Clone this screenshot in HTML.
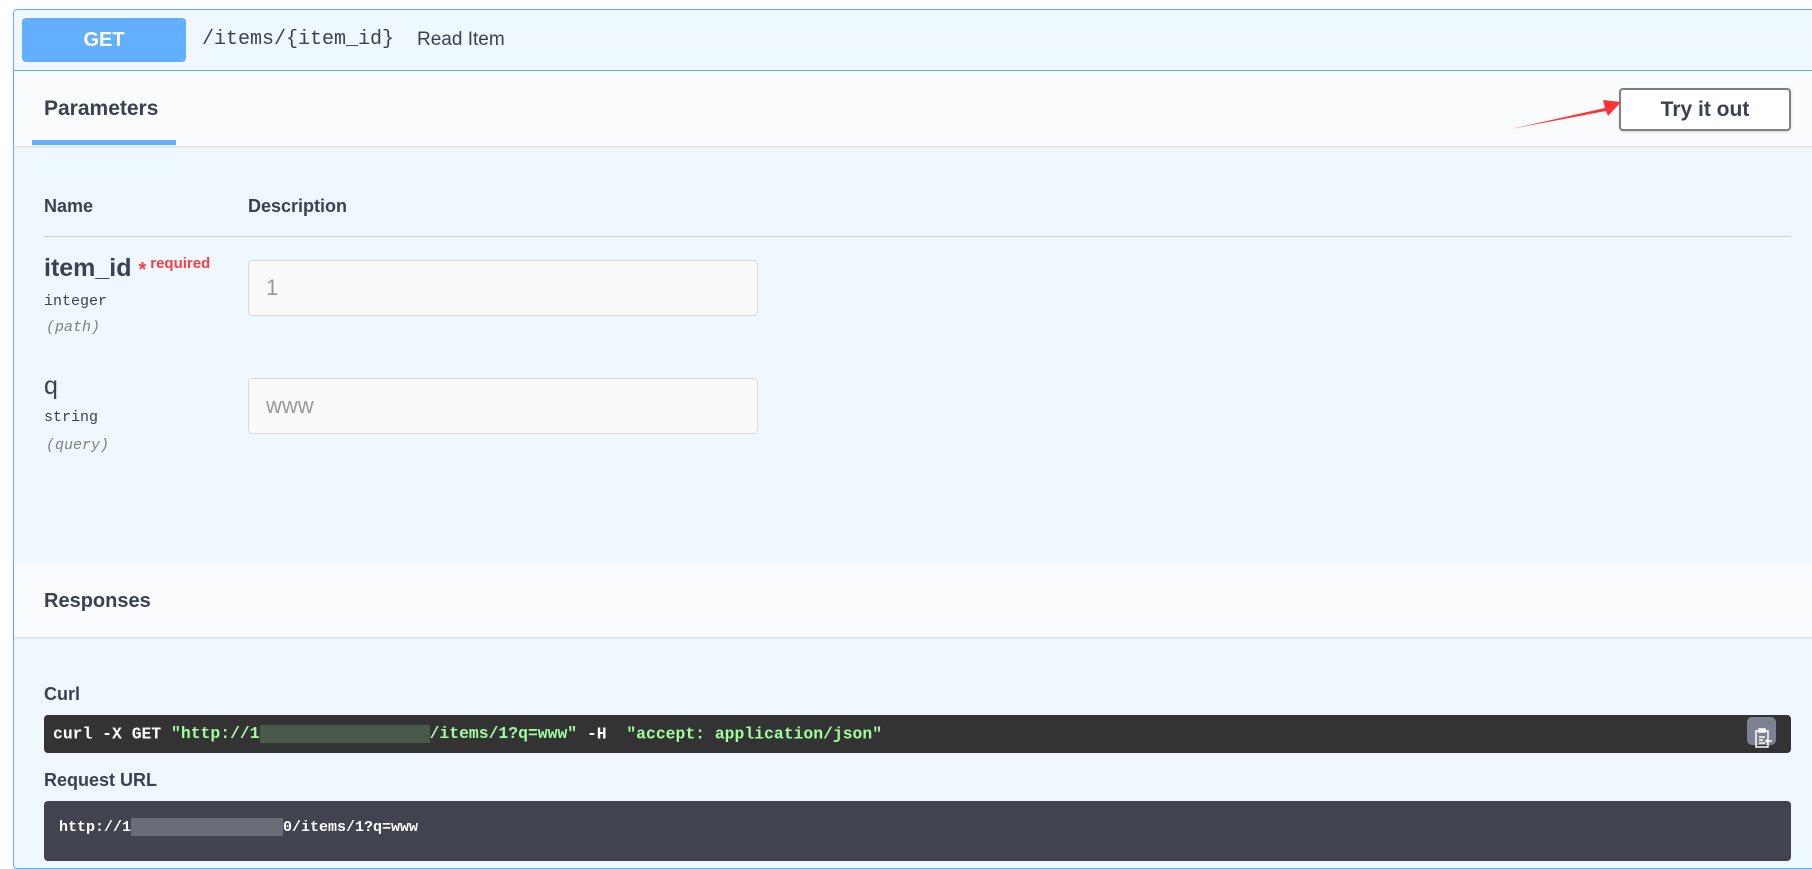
<!DOCTYPE html>
<html><head><meta charset="utf-8"><style>
*{box-sizing:border-box;margin:0;padding:0}
body{width:1812px;height:851px;overflow:hidden;background:#fff;font-family:"Liberation Sans",sans-serif;color:#3b4151;position:relative}
.abs{position:absolute}
.mono{font-family:"Liberation Mono",monospace}
</style></head><body>
<div class="abs" style="left:13px;top:9px;width:1820px;height:860px;border:1px solid #61affe;background:#eff7ff;border-radius:4px"></div>
<div class="abs" style="left:14px;top:70px;width:1800px;height:1px;background:#61affe"></div>
<div class="abs" style="left:22px;top:18px;width:164px;height:44px;background:#61affe;border-radius:4px;color:#fff;font-weight:bold;font-size:20px;line-height:44px;text-align:center">GET</div>
<div class="abs mono" style="left:202px;top:28px;font-size:20px;line-height:24px;color:#3b4151">/items/{item_id}</div>
<div class="abs" style="left:417px;top:29px;font-size:19px;line-height:22px;color:#3b4151">Read Item</div>

<div class="abs" style="left:14px;top:71px;width:1800px;height:75px;background:#fafbfd;box-shadow:0 1px 2px rgba(0,0,0,.12)"></div>
<div class="abs" style="left:44px;top:97px;font-size:21px;font-weight:bold;line-height:24px">Parameters</div>
<div class="abs" style="left:32px;top:140px;width:144px;height:5px;background:#61affe"></div>
<div class="abs" style="left:1619px;top:88px;width:172px;height:43px;border:2px solid #808080;border-radius:4px;background:#fff;font-weight:bold;font-size:21px;line-height:39px;text-align:center;box-shadow:0 1px 2px rgba(0,0,0,.15)">Try it out</div>
<svg class="abs" style="left:1505px;top:95px" width="120" height="40"><polygon points="6,34 100,13 98,5 116,7 103,21 101,16" fill="#f33"/></svg>

<div class="abs" style="left:44px;top:196px;font-size:18px;font-weight:bold;line-height:20px">Name</div>
<div class="abs" style="left:248px;top:196px;font-size:18px;font-weight:bold;line-height:20px">Description</div>
<div class="abs" style="left:44px;top:236px;width:1747px;height:1px;background:#c8ced8"></div>

<div class="abs" style="left:44px;top:254px;font-size:25px;font-weight:bold;line-height:28px">item_id <span style="color:#f93e3e;font-size:20px">*</span> <span style="color:#f93e3e;font-size:15px;position:relative;top:-8px;left:-3px">required</span></div>
<div class="abs mono" style="left:44px;top:293px;font-size:15px">integer</div>
<div class="abs mono" style="left:46px;top:319px;font-size:15px;font-style:italic;color:#808080">(path)</div>
<div class="abs" style="left:248px;top:260px;width:510px;height:56px;background:#fafafa;border:1px solid #d9d9d9;border-radius:4px;font-size:22px;color:#999;padding-left:17px;line-height:54px">1</div>

<div class="abs" style="left:44px;top:372px;font-size:25px;line-height:28px">q</div>
<div class="abs mono" style="left:44px;top:409px;font-size:15px">string</div>
<div class="abs mono" style="left:46px;top:437px;font-size:15px;font-style:italic;color:#808080">(query)</div>
<div class="abs" style="left:248px;top:378px;width:510px;height:56px;background:#fafafa;border:1px solid #d9d9d9;border-radius:4px;font-size:22px;color:#999;padding-left:17px;line-height:54px">www</div>

<div class="abs" style="left:14px;top:563px;width:1800px;height:74px;background:#fafbfd;box-shadow:0 1px 2px rgba(0,0,0,.12)"></div>
<div class="abs" style="left:44px;top:589px;font-size:20px;font-weight:bold;line-height:24px">Responses</div>

<div class="abs" style="left:44px;top:684px;font-size:18px;font-weight:bold;line-height:20px">Curl</div>
<div class="abs" style="left:44px;top:715px;width:1747px;height:38px;background:#333;border-radius:4px"></div>
<div class="abs mono" style="left:53px;top:725px;font-size:16.4px;font-weight:bold;color:#fff;white-space:pre;line-height:18px">curl -X GET <span style="color:#a2fca2">"http://1<span style="display:inline-block;width:170px;height:18px;background:#4a5a4a;vertical-align:middle"></span>/items/1?q=www"</span> -H  <span style="color:#a2fca2">"accept: application/json"</span></div>
<div class="abs" style="left:1747px;top:717px;width:29px;height:28px;background:#7d8293;border-radius:5px"></div>
<svg class="abs" style="left:1754px;top:728px" width="20" height="22" fill="none" stroke="#fff" stroke-width="1.5"><rect x="2" y="3" width="12" height="16"/><rect x="5" y="1" width="6" height="3" fill="#fff"/><path d="M5 9h6M5 12h4M5 15h6M18 13h-6M14 11l-2 2 2 2"/></svg>

<div class="abs" style="left:44px;top:770px;font-size:18px;font-weight:bold;line-height:20px">Request URL</div>
<div class="abs" style="left:44px;top:801px;width:1747px;height:60px;background:#41444e;border-radius:4px"></div>
<div class="abs mono" style="left:59px;top:818px;font-size:15px;font-weight:bold;color:#fff;white-space:pre;line-height:18px">http://1<span style="display:inline-block;width:152px;height:18px;background:#6a6d78;vertical-align:middle"></span>0/items/1?q=www</div>
</body></html>
